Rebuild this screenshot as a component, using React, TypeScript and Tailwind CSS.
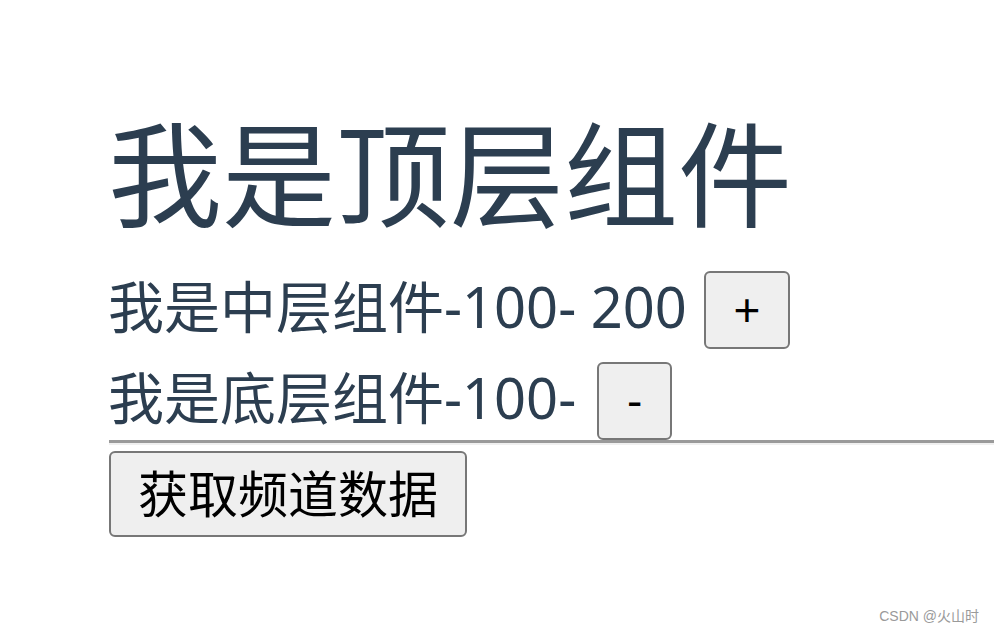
export default function App() {
  const font = { fontFamily: '"Noto Sans", "Noto Sans CJK SC", sans-serif' };
  return (
    <div className="relative h-[634px] w-[994px] overflow-hidden bg-white" style={font}>
      <div className="pl-[108px] pt-[104px] text-[#2c3e50]">
        <h1 className="text-[114px] leading-[140px] font-normal">我是顶层组件</h1>
        <div className="mt-[27px] flex h-[78px] items-center text-[56px] leading-none">
          <span className="mb-[8px]">我是中层组件-100- 200</span>
          <button className="ml-[17px] h-[78px] w-[86px] rounded-[6px] border-[2.5px] border-[#777777] bg-[#efefef] text-[46px] text-black" style={{ fontFamily: '"Liberation Sans", sans-serif' }}>
            +
          </button>
        </div>
        <div className="mt-[13px] flex h-[78px] items-center text-[56px] leading-none">
          <span className="mb-[8px]">我是底层组件-100-</span>
          <button className="ml-[21px] h-[78px] w-[75px] rounded-[6px] border-[2.5px] border-[#777777] bg-[#efefef] text-[46px] text-black" style={{ fontFamily: '"Liberation Sans", sans-serif' }}>
            -
          </button>
        </div>
        <hr className="ml-[1px] border-0 border-t-[3px] border-b-2 border-t-[#9a9a9a] border-b-[#f0f0f0]" />
        <button className="ml-[1px] mt-[6px] h-[86px] w-[358px] rounded-[6px] border-[2.5px] border-[#777777] bg-[#efefef] text-[50px] text-black">
          获取频道数据
        </button>
      </div>
      <div className="absolute right-[15px] bottom-[7px] text-[14px] text-[#9a9a9a]" style={{ fontFamily: '"Liberation Sans", "Noto Sans CJK SC", sans-serif' }}>
        CSDN @火山时
      </div>
    </div>
  );
}
